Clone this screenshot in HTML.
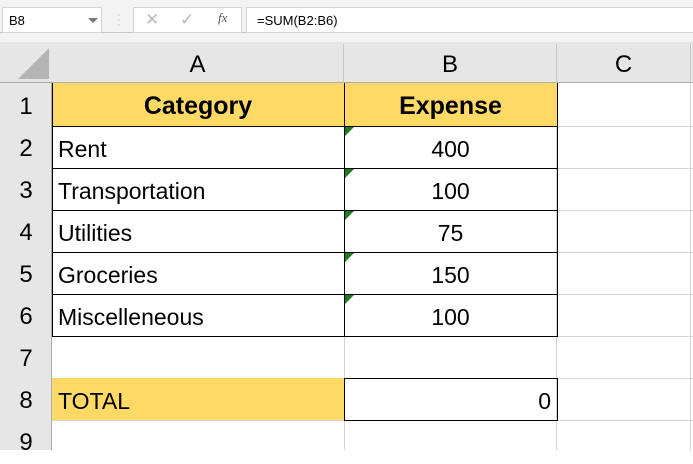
<!DOCTYPE html>
<html><head><style>
body{margin:0;width:693px;height:450px;overflow:hidden;background:#fff;font-family:"Liberation Sans",sans-serif;position:relative}
.a{position:absolute;box-sizing:border-box}
.t{display:flex;align-items:center}
</style></head><body>
<div class="a" style="left:0;top:0;width:693px;height:42px;background:#f3f3f3"></div>
<div class="a" style="left:0;top:32px;width:693px;height:1px;background:#c6c6c6"></div>
<div class="a t" style="left:2px;top:7px;width:100px;height:26px;background:#fff;border:1px solid #d4d4d4;font-size:13px;padding-left:6px">B8</div>
<div class="a" style="left:88px;top:18px;width:0;height:0;border-left:5px solid transparent;border-right:5px solid transparent;border-top:5px solid #777"></div>
<div class="a" style="left:117px;top:13px;color:#aaa;font-size:11px;line-height:5px">·<br>·<br>·</div>
<div class="a" style="left:133px;top:7px;width:109px;height:26px;background:#fff;border:1px solid #d4d4d4"></div>
<div class="a" style="left:145px;top:10px;color:#bbb;font-size:17px">✕</div>
<div class="a" style="left:180px;top:10px;color:#bbb;font-size:17px">✓</div>
<div class="a" style="left:218px;top:10px;color:#555;font-size:13px;font-style:italic;font-family:'Liberation Serif',serif">fx</div>
<div class="a t" style="left:246px;top:7px;width:450px;height:26px;background:#fff;border:1px solid #d4d4d4;font-size:13px;padding-left:10px">=SUM(B2:B6)</div>

<div class="a" style="left:0;top:42px;width:693px;height:41px;background:#e6e6e6;border-bottom:1px solid #ababab"></div>
<div class="a" style="left:0;top:83px;width:52px;height:367px;background:#e6e6e6;border-right:1px solid #ababab"></div>
<svg class="a" style="left:16px;top:46px" width="34" height="34"><polygon points="33,2 33,33 2,33" fill="#b5b5b5"/></svg>
<div class="a t" style="left:52px;top:44px;width:292px;height:41px;justify-content:center;font-size:24px;border-right:1px solid #c8c8c8">A</div>
<div class="a t" style="left:344px;top:44px;width:213px;height:41px;justify-content:center;font-size:24px;border-right:1px solid #c8c8c8">B</div>
<div class="a t" style="left:557px;top:44px;width:134px;height:41px;justify-content:center;font-size:24px;border-right:1px solid #c8c8c8">C</div>

<div class="a" style="left:52px;top:85px;width:641px;height:365px;background:
repeating-linear-gradient(to bottom,transparent 0,transparent 41px,#d4d4d4 41px,#d4d4d4 42px)"></div>
<div class="a" style="left:556px;top:83px;width:1px;height:367px;background:#d4d4d4"></div>
<div class="a" style="left:690px;top:83px;width:1px;height:367px;background:#d4d4d4"></div>
<div class="a" style="left:344px;top:336px;width:1px;height:114px;background:#d4d4d4"></div>

<div class="a" style="left:0;top:86px;width:52px;font-size:24px;text-align:center;line-height:42px">1<br>2<br>3<br>4<br>5<br>6<br>7<br>8<br>9</div>

<div class="a" style="left:52px;top:83px;width:505px;height:43px;background:#ffd966"></div>
<div class="a" style="left:52px;top:378px;width:292px;height:42px;background:#ffd966"></div>
<div class="a" style="left:52px;top:83px;width:506px;height:254px;border:1px solid #000;border-top:none"></div>
<div class="a" style="left:344px;top:83px;width:1px;height:254px;background:#000"></div>
<div class="a" style="left:52px;top:126px;width:505px;height:1px;background:#000"></div>
<div class="a" style="left:52px;top:168px;width:505px;height:1px;background:#000"></div>
<div class="a" style="left:52px;top:210px;width:505px;height:1px;background:#000"></div>
<div class="a" style="left:52px;top:252px;width:505px;height:1px;background:#000"></div>
<div class="a" style="left:52px;top:294px;width:505px;height:1px;background:#000"></div>
<div class="a" style="left:344px;top:378px;width:214px;height:43px;border:1px solid #000"></div>

<div class="a t" style="left:52px;top:85px;width:292px;height:43px;justify-content:center;font-size:25px;font-weight:bold">Category</div>
<div class="a t" style="left:344px;top:85px;width:213px;height:43px;justify-content:center;font-size:25px;font-weight:bold">Expense</div>

<div class="a" style="left:58px;top:128px;font-size:23px;line-height:42px">Rent<br>Transportation<br>Utilities<br>Groceries<br>Miscelleneous<br><br>TOTAL</div>
<div class="a" style="left:344px;top:128px;width:213px;font-size:23px;line-height:42px;text-align:center">400<br>100<br>75<br>150<br>100</div>
<div class="a t" style="left:344px;top:380px;width:207px;height:43px;justify-content:flex-end;font-size:23px">0</div>

<svg class="a" style="left:345px;top:127px" width="12" height="220">
<polygon points="0,0 9,0 0,9" fill="#1e7a1e"/>
<polygon points="0,42 9,42 0,51" fill="#1e7a1e"/>
<polygon points="0,84 9,84 0,93" fill="#1e7a1e"/>
<polygon points="0,126 9,126 0,135" fill="#1e7a1e"/>
<polygon points="0,168 9,168 0,177" fill="#1e7a1e"/>
</svg>
</body></html>
